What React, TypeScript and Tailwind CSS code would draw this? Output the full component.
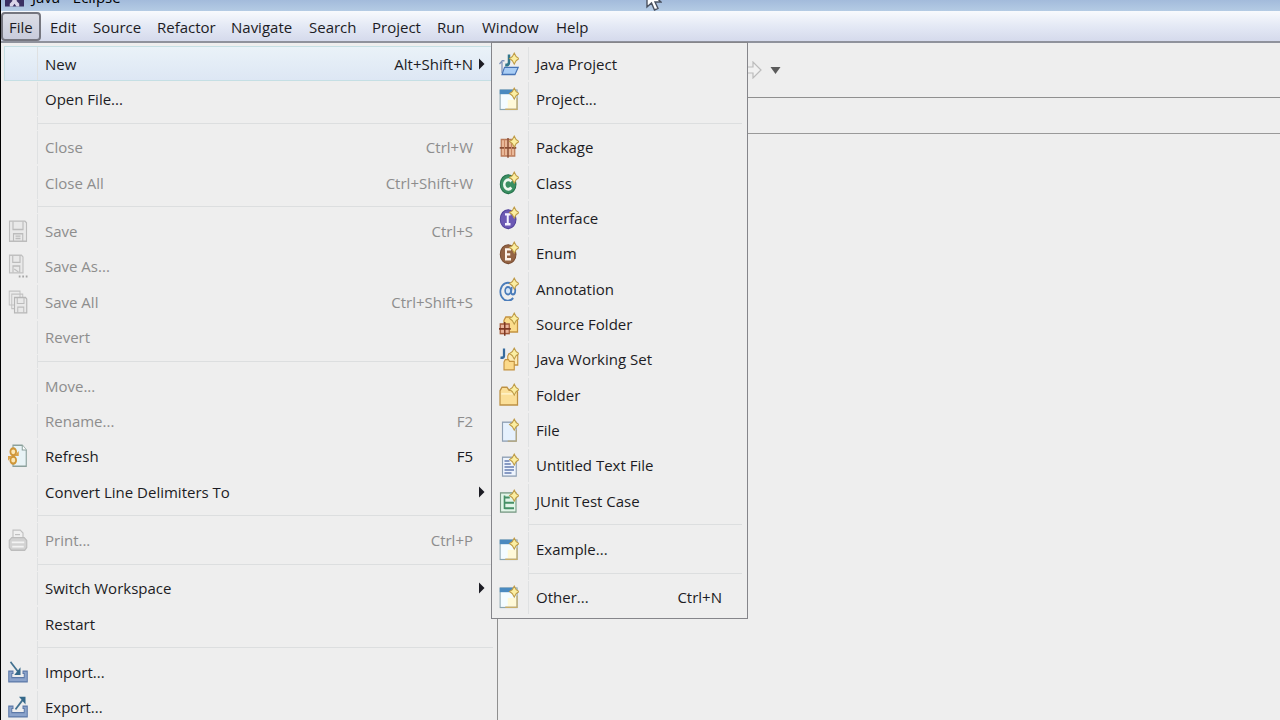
import type { ReactNode } from "react";

type Entry = {
  label?: string;
  shortcut?: string;
  icon?: ReactNode;
  disabled?: boolean;
  submenu?: boolean;
  active?: boolean;
};

function Icon({ children }: { children: ReactNode }) {
  return (
    <svg viewBox="0 0 16 16" className="h-6 w-5" preserveAspectRatio="none" aria-hidden="true">
      {children}
    </svg>
  );
}

function Sparkle() {
  return (
    <path
      d="M12.2 0.7 L13.7 3 L15.9 4.4 L13.7 5.8 L12.2 8.1 L10.7 5.8 L8.5 4.4 L10.7 3 Z"
      fill="#fbeea2"
      stroke="#bf9c48"
      strokeWidth="0.8"
    />
  );
}

const javaProject = (
  <Icon>
    <path d="M2.4 14 V6.6 M0.4 8 L2.6 5.8 H4.4" fill="none" stroke="#7d92ba" strokeWidth="1" />
    <path d="M4.4 10.2 H15.4 L12.8 15 H2.4 Z" fill="#a9cdf5" stroke="#4673b5" strokeWidth="0.9" />
    <path d="M8 1.6 V7 Q7.8 9 5 8.6" fill="none" stroke="#33768a" strokeWidth="2" />
    <Sparkle />
  </Icon>
);

const wizard = (
  <Icon>
    <rect x="0.9" y="2" width="13.6" height="13" fill="#f4fcff" stroke="#8aa5b0" strokeWidth="0.8" />
    <rect x="0.6" y="1.8" width="11" height="3" fill="#4a8ac0" />
    <path d="M14.4 7 V14.9 H5" fill="none" stroke="#c9ae68" strokeWidth="1" />
    <rect x="7" y="8.6" width="6.6" height="5.4" fill="#fff9d8" />
    <Sparkle />
  </Icon>
);

const packageIcon = (
  <Icon>
    <path d="M1.8 3 H12.6 V14 H1.8 Z" fill="#e9b898" stroke="#b97a58" strokeWidth="1" />
    <path d="M7.2 2 V15.2 M0.6 8.6 H13.8" fill="none" stroke="#8a4f36" strokeWidth="1.2" />
    <path d="M4.4 3 V14 M10 3 V14" fill="none" stroke="#c98663" strokeWidth="0.8" />
    <Sparkle />
  </Icon>
);

const classIcon = (
  <Icon>
    <circle cx="7.3" cy="8.8" r="6.3" fill="#3a8f62" stroke="#24704a" strokeWidth="0.8" />
    <path d="M9.9 7 A3.2 3.2 0 1 0 9.9 11" fill="none" stroke="#eef8ef" strokeWidth="2" />
    <Sparkle />
  </Icon>
);

const interfaceIcon = (
  <Icon>
    <circle cx="7.3" cy="8.8" r="6.3" fill="#6c59b4" stroke="#51409a" strokeWidth="0.8" />
    <path d="M4.8 5.6 H9.2 M7 5.6 V12.2 M4.8 12.2 H9.2" fill="none" stroke="#f4f1ff" strokeWidth="1.6" />
    <Sparkle />
  </Icon>
);

const enumIcon = (
  <Icon>
    <circle cx="7.3" cy="8.8" r="6.3" fill="#946444" stroke="#784c31" strokeWidth="0.8" />
    <path d="M9.6 5.6 H5.6 V12.2 H9.6 M5.6 8.9 H9" fill="none" stroke="#fdf3ea" strokeWidth="1.6" />
    <Sparkle />
  </Icon>
);

const annotationIcon = (
  <Icon>
    <path
      d="M11.4 14 A6 6 0 1 1 13 8.8 Q13 11.6 11 11.6 Q9.4 11.6 9.8 9.4 L10.2 6.6"
      fill="none"
      stroke="#4a7cba"
      strokeWidth="1.4"
    />
    <ellipse cx="7.2" cy="9.2" rx="2.3" ry="2.5" fill="#d5e6f8" stroke="#4a7cba" strokeWidth="1.3" />
    <Sparkle />
  </Icon>
);

const sourceFolder = (
  <Icon>
    <path d="M4 5.6 L5.4 3.4 H9 L10 4.8 H14.8 V13.4 H4 Z" fill="#fbdc8c" stroke="#c4923f" strokeWidth="1" />
    <rect x="1" y="8" width="7.2" height="6.4" fill="#eab39a" stroke="#a35a3a" strokeWidth="1" />
    <path d="M4.6 6.6 V15.8 M0 11.2 H9.4" fill="none" stroke="#7d3722" strokeWidth="1.2" />
    <Sparkle />
  </Icon>
);

const workingSet = (
  <Icon>
    <path d="M4 1 V6 Q3.8 7.6 1.2 7" fill="none" stroke="#356a9e" strokeWidth="1.8" />
    <path d="M7 6 L8 4.4 H10.4 L11 5.6 H15 V12 H7 Z" fill="#fdeab3" stroke="#c4923f" strokeWidth="0.9" />
    <path d="M4 10 L5 8.4 H7.6 L8.4 9.6 H12.2 V15.2 H4 Z" fill="#fbd98a" stroke="#c4923f" strokeWidth="0.9" />
    <Sparkle />
  </Icon>
);

const folderIcon = (
  <Icon>
    <path
      d="M0.8 14.6 V5.2 L2.4 2.8 H6.4 L8 4.8 H13.4 L14.8 6 V14.6 Z"
      fill="#fbdf98"
      stroke="#bd9144"
      strokeWidth="1"
    />
    <path d="M1.8 7.2 H13.6" stroke="#fff1c4" strokeWidth="1.2" />
    <Sparkle />
  </Icon>
);

const fileIcon = (
  <Icon>
    <rect x="2.8" y="2.8" width="11" height="12.6" fill="#e6f1fd" stroke="#8fa0b4" strokeWidth="0.9" />
    <path d="M13.8 8 V15.4 H7" fill="none" stroke="#b7a778" strokeWidth="0.9" />
    <Sparkle />
  </Icon>
);

const textFile = (
  <Icon>
    <rect x="2.8" y="2.8" width="11" height="12.6" fill="#eef4fd" stroke="#8fa0b4" strokeWidth="0.9" />
    <path d="M4.4 5.4 H8.4 M4.4 7.4 H9.4 M4.4 9.4 H12 M4.4 11.4 H12 M4.4 13.4 H10" stroke="#667cb0" strokeWidth="1" />
    <Sparkle />
  </Icon>
);

const junitIcon = (
  <Icon>
    <rect x="1.2" y="2.6" width="12.4" height="12.8" fill="#e2f5e8" stroke="#789a85" strokeWidth="0.9" />
    <path d="M4.4 4.4 V13.4 M4.4 5.6 H8.6 M4.4 9.2 H12 M4.4 12.8 H12" fill="none" stroke="#469066" strokeWidth="1.3" />
    <Sparkle />
  </Icon>
);

const saveIcon = (
  <Icon>
    <path d="M1.2 1.4 H13.6 L14.8 2.6 V14.8 H1.2 Z" fill="#e9e9e9" stroke="#bcbcbc" strokeWidth="0.9" />
    <path d="M4 1.6 V7 H12 V1.6 M4.4 14.6 V9.8 H11.8 V14.6 M6 11.4 H10 M6 13 H10" fill="none" stroke="#bcbcbc" strokeWidth="0.9" />
  </Icon>
);

const saveAsIcon = (
  <Icon>
    <path d="M1.2 0.8 H10.8 L12 2 V12.6 H1.2 Z" fill="#e9e9e9" stroke="#c0c0c0" strokeWidth="0.9" />
    <path d="M3.8 1 V5.6 H9.6 V1 M4 12.4 V8 H9.4 V12.4 M5 10 L8.4 12" fill="none" stroke="#bcbcbc" strokeWidth="0.9" />
    <path d="M8.6 15 H10 M11.4 15 H12.8 M14.2 15 H15.6" stroke="#a6a6a6" strokeWidth="1.2" />
  </Icon>
);

const saveAllIcon = (
  <Icon>
    <path d="M1 0.8 H9.6 V10 H1 Z M3 2.8 H11.8 V12.4 H3 Z" fill="#ebebeb" stroke="#c2c2c2" strokeWidth="0.8" />
    <path d="M5.2 5 H14 L15 6 V15.2 H5.2 Z" fill="#e9e9e9" stroke="#b6b6b6" strokeWidth="0.9" />
    <path d="M7.4 5.2 V9 H12.8 V5.2 M7.8 15 V11.4 H12.6 V15" fill="none" stroke="#bcbcbc" strokeWidth="0.8" />
  </Icon>
);

const refreshIcon = (
  <Icon>
    <path d="M4 0.8 H11.4 L14.6 4 V14.8 H4 Z" fill="#e8f3f6" stroke="#8ba09b" strokeWidth="0.9" />
    <path d="M11.4 0.8 V4 H14.6" fill="#fff" stroke="#8ba09b" strokeWidth="0.8" />
    <circle cx="4.2" cy="5.2" r="2.3" fill="#fbe7b6" stroke="#cf9638" strokeWidth="1.4" />
    <circle cx="4.2" cy="10.8" r="2.3" fill="#fbe7b6" stroke="#cf9638" strokeWidth="1.4" />
    <path d="M5 8 H8.6 V4.6 Z M3.4 8 H0 V11.2 Z" fill="#d9a24a" />
  </Icon>
);

const printIcon = (
  <Icon>
    <path d="M4 7 V1.4 H9.8 L12 3.4 V7" fill="#f0f0f0" stroke="#c0c0c0" strokeWidth="0.9" />
    <path d="M1 8.4 L3 6.4 H13 L15 8.4 V13 L13.4 14.8 H2.6 L1 13 Z" fill="#d2d2d2" stroke="#bcbcbc" strokeWidth="0.9" />
    <path d="M3 9.6 H13 M3.4 12.4 H12.6" stroke="#f3f3f3" strokeWidth="1.1" />
    <path d="M5.6 4.4 H9.6" stroke="#c0c0c0" strokeWidth="0.8" />
  </Icon>
);

const trayPath = "M0.6 7.4 H4 V9 H3 V11.8 H13 V9 H12 V7.4 H15.4 V14.6 H0.6 Z";

const importIcon = (
  <Icon>
    <path d={trayPath} fill="#8ba3cb" stroke="#5c79a8" strokeWidth="0.8" />
    <path d="M2 1.2 L8 7.8" stroke="#41708f" strokeWidth="1.3" />
    <path d="M10 4.8 V10 H5 Z" fill="#35698a" />
  </Icon>
);

const exportIcon = (
  <Icon>
    <path d={trayPath} fill="#8ba3cb" stroke="#5c79a8" strokeWidth="0.8" />
    <path d="M6 9.6 L12 3" stroke="#41708f" strokeWidth="1.3" />
    <path d="M8.8 1.2 H14 V6.4 Z" fill="#35698a" />
  </Icon>
);

const fileMenu: Entry[] = [
  { label: "New", shortcut: "Alt+Shift+N", submenu: true, active: true },
  { label: "Open File..." },
  {},
  { label: "Close", shortcut: "Ctrl+W", disabled: true },
  { label: "Close All", shortcut: "Ctrl+Shift+W", disabled: true },
  {},
  { label: "Save", shortcut: "Ctrl+S", icon: saveIcon, disabled: true },
  { label: "Save As...", icon: saveAsIcon, disabled: true },
  { label: "Save All", shortcut: "Ctrl+Shift+S", icon: saveAllIcon, disabled: true },
  { label: "Revert", disabled: true },
  {},
  { label: "Move...", disabled: true },
  { label: "Rename...", shortcut: "F2", disabled: true },
  { label: "Refresh", shortcut: "F5", icon: refreshIcon },
  { label: "Convert Line Delimiters To", submenu: true },
  {},
  { label: "Print...", shortcut: "Ctrl+P", icon: printIcon, disabled: true },
  {},
  { label: "Switch Workspace", submenu: true },
  { label: "Restart" },
  {},
  { label: "Import...", icon: importIcon },
  { label: "Export...", icon: exportIcon },
];

const newMenu: Entry[] = [
  { label: "Java Project", icon: javaProject },
  { label: "Project...", icon: wizard },
  {},
  { label: "Package", icon: packageIcon },
  { label: "Class", icon: classIcon },
  { label: "Interface", icon: interfaceIcon },
  { label: "Enum", icon: enumIcon },
  { label: "Annotation", icon: annotationIcon },
  { label: "Source Folder", icon: sourceFolder },
  { label: "Java Working Set", icon: workingSet },
  { label: "Folder", icon: folderIcon },
  { label: "File", icon: fileIcon },
  { label: "Untitled Text File", icon: textFile },
  { label: "JUnit Test Case", icon: junitIcon },
  {},
  { label: "Example...", icon: wizard },
  {},
  { label: "Other...", shortcut: "Ctrl+N", icon: wizard },
];

const menuBar = [
  { label: "File", width: "w-10", active: true },
  { label: "Edit", width: "w-[43px]" },
  { label: "Source", width: "w-16" },
  { label: "Refactor", width: "w-[74px]" },
  { label: "Navigate", width: "w-[78px]" },
  { label: "Search", width: "w-[63px]" },
  { label: "Project", width: "w-[65px]" },
  { label: "Run", width: "w-[45px]" },
  { label: "Window", width: "w-[74px]" },
  { label: "Help", width: "w-12" },
];

function MenuList({ entries, label }: { entries: Entry[]; label: string }) {
  return (
    <ul role="menu" aria-label={label} className="flex flex-1 flex-col">
      {entries.map((entry, i) =>
        entry.label ? (
          <li key={i} role="none" className="flex grow basis-0">
            <button
              type="button"
              role="menuitem"
              disabled={entry.disabled}
              className={`flex flex-1 items-center border text-left whitespace-nowrap ${
                entry.active
                  ? "border-[#c5dfe4] bg-linear-to-b from-[#eaf2f8] to-[#dde7f4]"
                  : "border-transparent"
              } ${entry.disabled ? "text-[#8d8d8d]" : "text-[#1c1c24]"}`}
            >
              <span className="flex w-[33px] shrink-0 items-center self-stretch border-r border-[#dfe1e2] pl-[3px]">
                {entry.icon}
              </span>
              <span className="flex-1 pl-[7px]">{entry.label}</span>
              <span>{entry.shortcut}</span>
              <span className="flex w-[19px] shrink-0 pl-[6px]">
                {entry.submenu && (
                  <svg viewBox="0 0 6 12" className="h-3 w-[6px]" aria-hidden="true">
                    <path d="M0 0.5 L5.5 6 L0 11.5 Z" fill="#1c1c24" />
                  </svg>
                )}
              </span>
            </button>
          </li>
        ) : (
          <li key={i} role="separator" className="flex h-[13px] shrink-0 pl-px">
            <span className="w-[33px] border-r border-[#dfe1e2]" />
            <span className="mt-[6px] h-px flex-1 bg-[#dcdedf]" />
          </li>
        ),
      )}
    </ul>
  );
}

export default function App() {
  return (
    <div className="flex h-screen overflow-hidden border-l border-black bg-[#eeeeee] font-['Open_Sans',sans-serif] text-[15px] leading-5 text-[#1c1c24]">
      <div className="relative flex min-w-0 flex-1 flex-col">
        <header className="relative flex h-[11px] shrink-0 items-end gap-2 overflow-hidden bg-linear-to-b from-[#a3bbdb] to-[#b4cbe4] pb-1 pl-1">
          <svg viewBox="0 0 20 20" className="h-5 w-[19px] shrink-0" aria-hidden="true">
            <rect width="20" height="20" fill="#3a3063" />
            <path d="M5 20 V17 L8 14 L6 12 H14 L12 14 L15 17 V20 H12 L10 17 L8 20 Z" fill="#d9d4e8" />
          </svg>
          <span className="text-black">Java - Eclipse</span>
          <svg viewBox="0 0 16 24" className="absolute -top-3 left-[645px] h-6 w-4" aria-hidden="true">
            <path d="M1 1 V19 L5.5 15 L8.5 22 L12 20.5 L9 14 H15 Z" fill="#fff" stroke="#4a5260" strokeWidth="1.4" />
          </svg>
        </header>

        <nav
          aria-label="Main menu"
          className="flex h-8 shrink-0 items-stretch border-b-2 border-[#8f929c] bg-linear-to-b from-[#f8fafd] via-[#e4e9f5] to-[#d5daec] pt-px"
        >
          {menuBar.map((item) => (
            <button
              key={item.label}
              type="button"
              className={`shrink-0 text-left ${item.width} ${
                item.active
                  ? "mr-px rounded-sm border-2 border-[#75767f] bg-linear-to-b from-[#dcdee6] to-[#c9ccdb] pl-[6px]"
                  : "pl-2"
              }`}
            >
              {item.label}
            </button>
          ))}
        </nav>

        <section aria-label="Toolbar" className="flex h-[55px] shrink-0 items-center border-b border-[#8f8f8f] pl-[746px]">
          <button type="button" aria-label="Forward" disabled>
            <svg viewBox="0 0 15 18" className="h-[18px] w-[15px]" aria-hidden="true">
              <path d="M0 6 H6 V1 L14 9 L6 17 V12 H0 Z" fill="#f1f1f1" stroke="#bcbcbc" strokeWidth="1.2" />
            </svg>
          </button>
          <button type="button" aria-label="Forward history" className="pl-2">
            <svg viewBox="0 0 11 7" className="h-[7px] w-[11px]" aria-hidden="true">
              <path d="M0.5 0 H10.5 L5.5 7 Z" fill="#5b5b5b" />
            </svg>
          </button>
        </section>
        <div className="h-9 shrink-0 border-b border-[#999999]" />
        <main className="flex-1" />

        <div className="absolute top-[43px] left-0 flex min-h-[686px] w-[497px] flex-col border-r border-[#8f8f8f] bg-[#eeeeee] pt-[3px] pr-1 pb-1 pl-[3px]">
          <MenuList entries={fileMenu} label="File" />
        </div>

        <div className="absolute top-[42px] left-[490px] flex min-h-[577px] w-[257px] flex-col border border-[#85858a] bg-[#eeeeee] pt-[3px] pr-[5px] pb-[3px] pl-[3px]">
          <MenuList entries={newMenu} label="New" />
        </div>
      </div>
    </div>
  );
}
